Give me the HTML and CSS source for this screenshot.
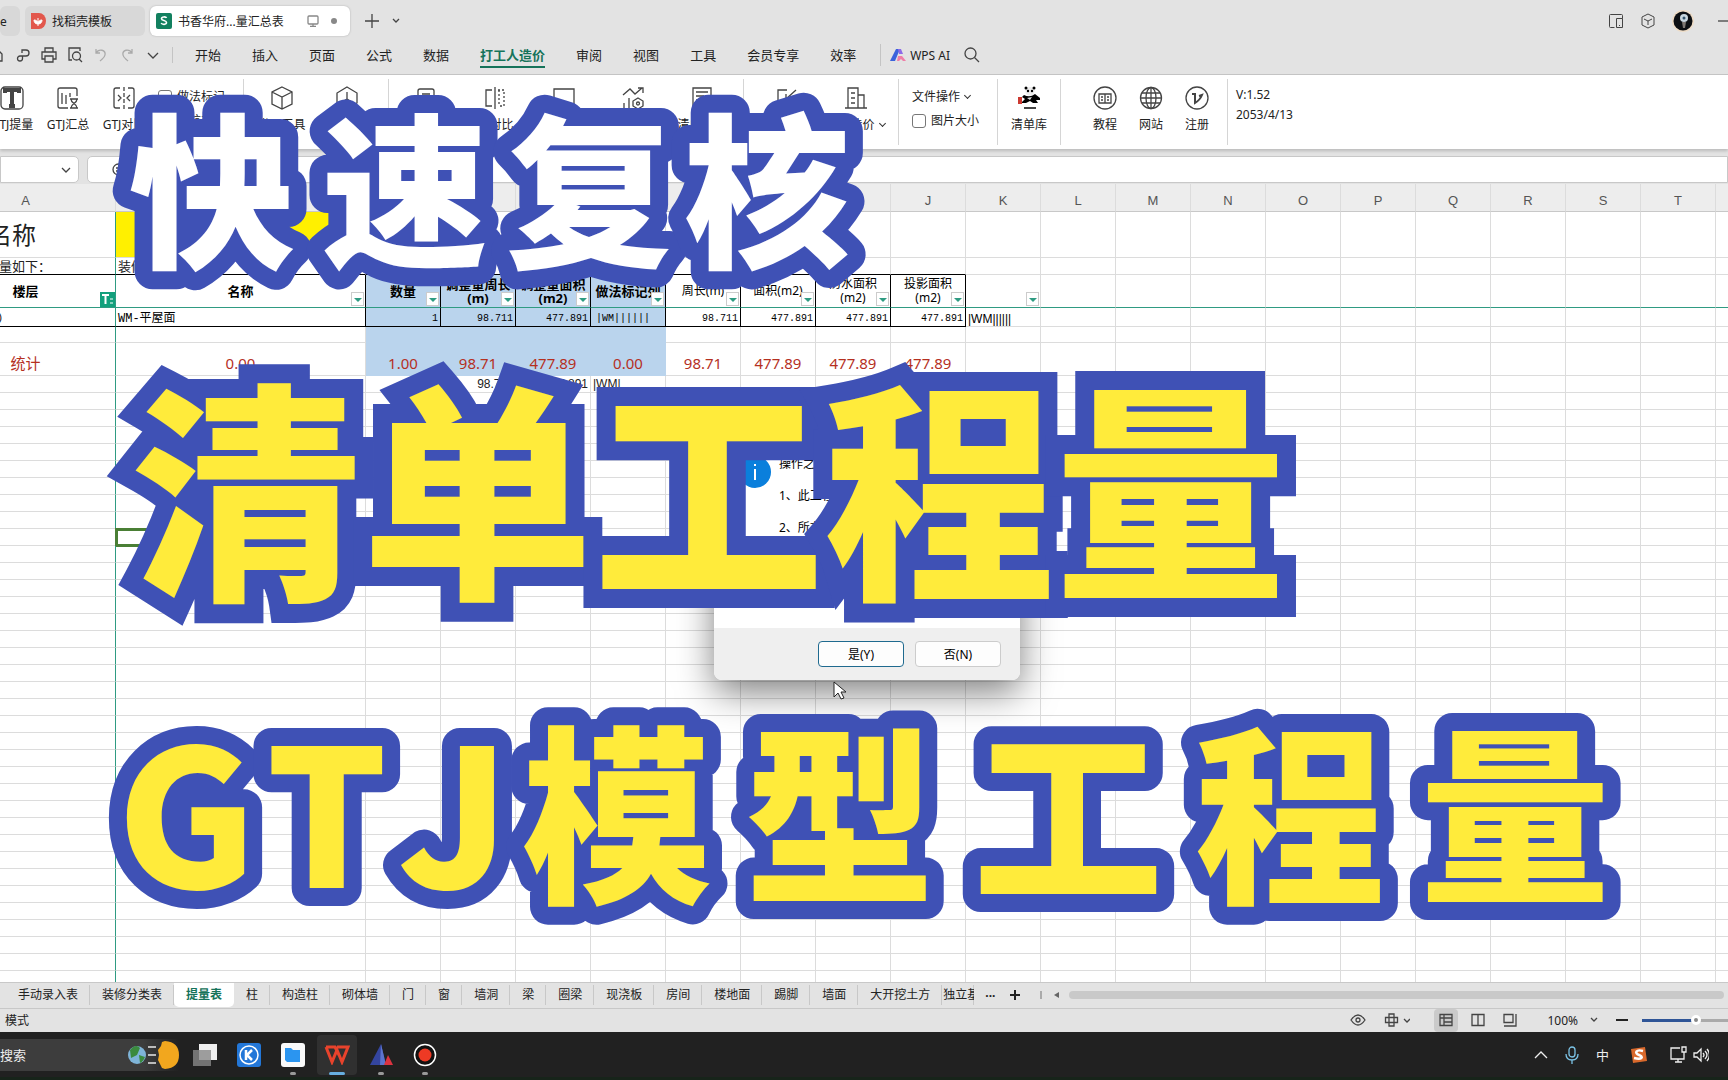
FILE: index.html
```
<!DOCTYPE html>
<html lang="zh-CN">
<head>
    <meta charset="UTF-8">
    <meta name="viewport" content="width=device-width, initial-scale=1.0">
    <title>书香华府工程量汇总表</title>
    <link rel="stylesheet" href="styles.css">
</head>
<body>
    <header class="titlebar">
        <button class="tab tab-cut">e</button>
        <button class="tab tab-docer">
            <svg width="16" height="16" viewBox="0 0 16 16"><path d="M1 0h8a7 8 0 0 1 0 16H1z" fill="#e2574c"/><path d="M8 13V5M8 11C5 11 4 9 4 7c2 0 4 1 4 4zM8 11c3 0 4-2 4-4-2 0-4 1-4 4z" stroke="#fff" fill="#fff"/></svg>
            找稻壳模板
        </button>
        <button class="tab tab-active">
            <svg width="16" height="16" viewBox="0 0 16 16"><rect width="16" height="16" rx="2" fill="#12805f"/><path d="M10.500 5C10 3.500 5.500 3.400 5.500 5.800c0 2.200 5 1.400 5 3.800 0 2.300-4.500 2.200-5.300.4" stroke="#fff" stroke-width="1.600" fill="none"/></svg>
            <span class="tab-name">书香华府...量汇总表</span>
            <svg class="ico grey" width="12" height="12" viewBox="0 0 12 12"><rect x="1" y="1" width="10" height="8" rx="1"/><path d="M6 9v2M3 11.500h6"/></svg>
            <i class="dot"></i>
        </button>
        <button class="plain"><svg class="ico" width="16" height="16" viewBox="0 0 16 16"><path d="M8 1v14M1 8h14"/></svg></button>
        <button class="plain"><svg class="ico" width="8" height="8" viewBox="0 0 8 8"><path d="M1 2l3 3 3-3"/></svg></button>
        <div class="window-tools">
            <svg class="ico thin" width="16" height="16" viewBox="0 0 16 16"><path d="M6.500 14.500h-4q-1 0-1-1v-11q0-1 1-1h11q1 0 1 1v3M8.500 5.500h6v9h-6zM11 12.500h1"/></svg>
            <svg class="ico thin" width="16" height="16" viewBox="0 0 16 16"><path d="M8 1l6 3v8l-6 3-6-3V4zM4 6l4 2 4-2M8 8v4"/></svg>
            <svg width="22" height="22" viewBox="0 0 22 22"><circle cx="11" cy="11" r="11" fill="#eedcc6"/><circle cx="11" cy="11" r="9.500" fill="#0c0f13"/><circle cx="12" cy="8" r="4" fill="#c9d6de"/><circle cx="12" cy="8" r="1.500" fill="#33536b"/><path d="M10 12h4l-1 6h-2z" fill="#7d7772"/></svg>
            <svg class="ico minimize" width="16" height="16" viewBox="0 0 16 16"><path d="M0 8h16"/></svg>
        </div>
    </header>

    <nav class="menubar">
        <div class="quick">
            <svg class="ico" width="16" height="16" viewBox="0 0 16 16"><path d="M2 7l6-5 5 5v7H9v-4M2 14h4"/></svg>
            <svg class="ico" width="16" height="16" viewBox="0 0 16 16"><path d="M7 6V3h4a3 3 0 0 1 0 6H5a2.500 2.500 0 1 0 2.500 2.500V9"/></svg>
            <svg class="ico" width="16" height="16" viewBox="0 0 16 16"><path d="M4 5V1h8v4M4 12H1V5h14v7h-3M4 9h8v6H4z"/></svg>
            <svg class="ico" width="16" height="16" viewBox="0 0 16 16"><path d="M5 13H2V1h11v3M15 15l-3-3"/><circle cx="9.500" cy="9" r="4"/></svg>
            <svg class="ico faint" width="16" height="16" viewBox="0 0 16 16"><path d="M3 2v4h4M3 6c3-5 10-3 9 2-.5 3-3 4-5 6"/></svg>
            <svg class="ico faint" width="16" height="16" viewBox="0 0 16 16"><path d="M13 2v4H9M13 6C10 1 3 3 4 8c.5 3 3 4 5 6"/></svg>
            <svg class="ico" width="16" height="16" viewBox="0 0 16 16"><path d="M3 6l5 5 5-5"/></svg>
        </div>
        <ul class="menu">
            <li><a href="#">开始</a></li>
            <li><a href="#">插入</a></li>
            <li><a href="#">页面</a></li>
            <li><a href="#">公式</a></li>
            <li><a href="#">数据</a></li>
            <li><a href="#" class="current">打工人造价</a></li>
            <li><a href="#">审阅</a></li>
            <li><a href="#">视图</a></li>
            <li><a href="#">工具</a></li>
            <li><a href="#">会员专享</a></li>
            <li><a href="#">效率</a></li>
        </ul>
        <button class="plain wps-ai">
            <svg width="16" height="14" viewBox="0 0 16 14"><path d="M0 13L6 1h4L5 13z" fill="#3b63dc"/><path d="M8 1h3l2 5h-4z" fill="#8d6be8"/><path d="M8 8h4l4 5h-3l-2-2-2 2H7z" fill="#ef7fa8"/></svg>
            WPS AI
        </button>
        <button class="plain"><svg class="ico" width="16" height="16" viewBox="0 0 16 16"><circle cx="6.500" cy="6.500" r="5.500"/><path d="M10.500 10.500L15 15"/></svg></button>
    </nav>

    <section class="ribbon">
        <div class="group group-gtj">
            <button class="tool"><svg class="ico" width="24" height="24" viewBox="0 0 24 24"><rect x="1" y="1" width="22" height="22" rx="4"/><path d="M5 7V4h14v3M12 4v16M9 20h6" stroke-width="4"/></svg>GTJ提量</button>
            <button class="tool"><svg class="ico" width="24" height="24" viewBox="0 0 24 24"><path d="M21 10V4q0-2-2-2H4Q2 2 2 4v16q0 2 2 2h8M6 7v11M10 9v9M14 7v4M14 13h8M14 22h8M15 13c0 5 6 4 6 9M21 13c0 5-6 4-6 9"/></svg>GTJ汇总</button>
            <button class="tool"><svg class="ico" width="24" height="24" viewBox="0 0 24 24"><path d="M8 2H4Q2 2 2 4v16q0 2 2 2h4M16 2h4q2 0 2 2v16q0 2-2 2h-4M6 9l3 3-3 3M18 9l-3 3 3 3"/><path d="M12 1v22" stroke-dasharray="4 2"/></svg>GTJ对比</button>
            <div class="checks">
                <label><input type="checkbox">做法标记</label>
                <label><input type="checkbox">导航栏</label>
            </div>
        </div>
        <div class="group group-tools">
            <button class="tool"><svg class="ico" width="24" height="24" viewBox="0 0 24 24"><path d="M12 1l10 5v12l-10 5-10-5V6zM2 6l10 5 10-5M12 11v12"/></svg>常用工具</button>
            <button class="tool"><svg class="ico" width="24" height="24" viewBox="0 0 24 24"><path d="M12 1l10 6v10l-10 6-10-6V7zM12 6v7M12 13l-5 3M12 13l5 3"/></svg><span>常用工具<i class="caret"></i></span></button>
        </div>
        <div class="group group-list">
            <button class="tool"><svg class="ico" width="24" height="24" viewBox="0 0 24 24"><path d="M20 11V5q0-2-2-2H6Q4 3 4 5v14q0 2 2 2h7M8 8h8M8 13h5"/><circle cx="18" cy="18" r="4"/><path d="M18 16v4"/></svg>清单工具</button>
            <button class="tool"><svg class="ico" width="24" height="24" viewBox="0 0 24 24"><path d="M9 4H3v16h6M12 1v22"/><path d="M15 4h6v16h-6M16 4v16" stroke-dasharray="2 2"/></svg><span>清单对比<i class="caret"></i></span></button>
            <button class="tool"><svg class="ico" width="24" height="24" viewBox="0 0 24 24"><path d="M2 20V3h20v17z"/></svg>工程</button>
            <button class="tool"><svg class="ico" width="24" height="24" viewBox="0 0 24 24"><path d="M2 9l7-6 5 5 7-6M17 2h5v5M3 17v6M8 12v11"/><path d="M17 12l5 3v5l-5 3-5-3v-5z"/><circle cx="17" cy="17.500" r="1.500"/></svg>分析</button>
            <button class="tool"><svg class="ico" width="24" height="24" viewBox="0 0 24 24"><path d="M21 12V2H3v20h8M6 6h12M6 10h8M6 14h4M19 19l4 4"/><circle cx="16" cy="16" r="4"/></svg>清单复核</button>
        </div>
        <div class="group group-price">
            <button class="tool"><svg class="ico" width="24" height="24" viewBox="0 0 24 24"><path d="M12 4H3v17h17v-8M21 4l-10 9M11 8v5h5"/></svg>做法标记</button>
            <button class="tool"><svg class="ico" width="24" height="24" viewBox="0 0 24 24"><path d="M1 22h22M4 22V2h10v20M14 9h6v13M7 7h4M7 12h4M7 17h4"/></svg><span>土建造价<i class="caret"></i></span></button>
        </div>
        <div class="group group-files">
            <div class="checks">
                <button class="plain">文件操作<i class="caret"></i></button>
                <label><input type="checkbox">图片大小</label>
            </div>
        </div>
        <div class="group group-lib">
            <button class="tool"><svg width="24" height="24" viewBox="0 0 24 24"><path d="M8 3q5-4 10 0l-1 5q-4 3-8 0z" fill="#eee"/><circle cx="9" cy="2" r="1.500"/><circle cx="17" cy="2" r="1.500"/><circle cx="11" cy="5" r="1.200"/><circle cx="15" cy="5" r="1.200"/><path d="M7 9q6 3 11-1l5 4v2h-4l2 3h-5l-3-2-4 2H4l4-4-3-2z"/><path d="M10 12l5-1-2 3z" fill="#ddd"/><rect x="1" y="11" width="4" height="7" fill="#cc3a31"/><path d="M7 21h12v2H7z" fill="#444"/></svg>清单库</button>
        </div>
        <div class="group group-help">
            <button class="tool"><svg class="ico" width="24" height="24" viewBox="0 0 24 24"><circle cx="12" cy="12" r="11"/><path d="M12 8v9M12 8H6v9h12V8zM8 11h2M8 14h2M14 11h2M14 14h2"/></svg>教程</button>
            <button class="tool"><svg class="ico" width="24" height="24" viewBox="0 0 24 24"><circle cx="12" cy="12" r="10.500"/><ellipse cx="12" cy="12" rx="5" ry="10.500"/><path d="M12 1v22M1 12h22M3 7h18M3 17h18"/></svg>网站</button>
            <button class="tool"><svg class="ico" width="24" height="24" viewBox="0 0 24 24"><circle cx="12" cy="12" r="11"/><path d="M7 8h3v9q5-3 7-8l-3 1" stroke-width="2"/></svg>注册</button>
        </div>
        <div class="version">V:1.52<br>2053/4/13</div>
    </section>

    <div class="formula">
        <div class="namebox"><svg class="ico" width="10" height="10" viewBox="0 0 10 10"><path d="M1 3l4 4 4-4"/></svg></div>
        <div class="fx">
            <svg class="ico" width="14" height="14" viewBox="0 0 14 14"><circle cx="6.500" cy="6.500" r="5.500"/><path d="M4 5h5M4 8h5M11 11l2 2"/></svg>
            <input type="text" aria-label="编辑栏">
        </div>
    </div>

    <main class="sheet">
        <table id="grid">
            <colgroup><col class="col-a"><col class="col-b"></colgroup>
            <thead><tr id="letters"></tr></thead>
            <tbody>
                <tr class="row-title"><td>名称</td><td class="yellow"></td><td></td><td></td><td class="green"></td></tr>
                <tr class="row-note"><td>提量如下：</td><td>装修提量模块</td><td></td><td>装修工程</td><td>首层</td><td class="right">1</td><td></td><td></td><td></td><td></td></tr>
                <tr class="row-head">
                    <th>楼层<button class="filter on" aria-label="筛选"><svg width="15" height="15" viewBox="0 0 15 15"><path d="M2 3h7M5.500 3v9" stroke="#fff" stroke-width="2"/><path d="M10 7h3M10 11h3" stroke="#fff"/></svg></button></th>
                    <th>名称<button class="filter"></button></th>
                    <th class="blue">数量<button class="filter"></button></th>
                    <th class="blue">调整量周长<br>(m)<button class="filter"></button></th>
                    <th class="blue">调整量面积<br>(m2)<button class="filter"></button></th>
                    <th class="blue">做法标记列<button class="filter"></button></th>
                    <th class="light">周长(m)<button class="filter"></button></th>
                    <th class="light">面积(m2)<button class="filter"></button></th>
                    <th class="light">防水面积<br>(m2)<button class="filter"></button></th>
                    <th class="light">投影面积<br>(m2)<button class="filter"></button></th>
                    <th class="bare"><button class="filter"></button></th>
                </tr>
                <tr class="row-data"><td>)</td><td class="name">WM-平屋面</td><td class="blue">1</td><td class="blue">98.711</td><td class="blue">477.891</td><td class="blue left">|WM||||||</td><td>98.711</td><td>477.891</td><td>477.891</td><td>477.891</td><td class="bare">|WM||||||</td></tr>
                <tr class="row-gap"><td></td><td></td><td class="blue"></td><td class="blue"></td><td class="blue"></td><td class="blue"></td></tr>
                <tr class="row-sum"><td>统计</td><td>0.00</td><td class="blue">1.00</td><td class="blue">98.71</td><td class="blue">477.89</td><td class="blue">0.00</td><td>98.71</td><td>477.89</td><td>477.89</td><td>477.89</td></tr>
                <tr class="row-plain"><td></td><td></td><td></td><td class="right">98.711</td><td class="right">477.891</td><td>|WM|</td></tr>
            </tbody>
        </table>
    </main>

    <footer>
        <div class="sheet-tabs">
            <button>手动录入表</button>
            <button>装修分类表</button>
            <button class="selected">提量表</button>
            <button>柱</button>
            <button>构造柱</button>
            <button>砌体墙</button>
            <button>门</button>
            <button>窗</button>
            <button>墙洞</button>
            <button>梁</button>
            <button>圈梁</button>
            <button>现浇板</button>
            <button>房间</button>
            <button>楼地面</button>
            <button>踢脚</button>
            <button>墙面</button>
            <button>大开挖土方</button>
            <button class="clipped">独立基</button>
            <span class="more">···</span>
            <svg class="ico add" width="12" height="12" viewBox="0 0 12 12"><path d="M6 1v10M1 6h10"/></svg>
            <i class="grip"></i>
            <svg width="5" height="6" viewBox="0 0 5 6"><path d="M5 0v6L0 3z" fill="#666"/></svg>
            <div class="hscroll"></div>
        </div>
        <div class="status">
            <span class="mode">模式</span>
            <svg class="ico" width="16" height="16" viewBox="0 0 16 16"><path d="M1 8q7-10 14 0-7 10-14 0z"/><circle cx="8" cy="8" r="2"/></svg>
            <svg class="ico move" width="26" height="16" viewBox="0 0 26 16"><path d="M5 5V2h5v3M5 11v3h5v-3M5 5.500H1.500v5H5M10 5.500h3.500v5H10M5 5.500h5v5H5zM20 7l3 3 3-3"/></svg>
            <button class="view view-on"><svg class="ico" width="14" height="14" viewBox="0 0 14 14"><path d="M1 1.500h12v11H1zM1 5h12M5 1.500v11M5 9h8"/></svg></button>
            <button class="view"><svg class="ico" width="14" height="14" viewBox="0 0 14 14"><path d="M1 1.500h12v11H1zM7 1.500v11"/></svg></button>
            <button class="view"><svg class="ico" width="14" height="14" viewBox="0 0 14 14"><path d="M1 1.500h9v8H1zM13 1v12H1"/></svg></button>
            <span class="percent">100%</span>
            <svg class="ico" width="8" height="8" viewBox="0 0 8 8"><path d="M1 2l3 3 3-3"/></svg>
            <svg class="ico minus" width="12" height="12" viewBox="0 0 12 12"><path d="M0 6h12"/></svg>
            <input class="zoom" type="range" aria-label="缩放" min="0" max="100" value="50">
        </div>
    </footer>

    <div class="taskbar">
        <div class="search">
            <span>搜索</span>
            <svg width="52" height="30" viewBox="0 0 52 30"><circle cx="10" cy="15" r="9" fill="#7fb4d8"/><path d="M3 10q6-7 10-2l-3 7-6 3zM12 15l6 2q-2 5-5 6z" fill="#3b8a3e"/><path d="M21 7h8M21 15h8M21 23h8" stroke="#bbb" stroke-width="2"/><path d="M35 2l3-1q14 1 14 14T38 29l-3-1-2-4-2-4 1-5-1-5 3-4z" fill="#f2a71e"/></svg>
        </div>
        <button class="app"><svg width="24" height="24" viewBox="0 0 24 24"><rect x="6" y="1" width="18" height="16" fill="#eee"/><rect y="7" width="18" height="16" fill="#888" opacity=".8"/></svg></button>
        <button class="app"><svg width="24" height="24" viewBox="0 0 24 24"><rect width="24" height="24" rx="3" fill="#2377d8"/><circle cx="12" cy="12" r="9" fill="none" stroke="#fff" stroke-width="1.500"/><path d="M9 7v10M15 7l-5 5 5 5" fill="none" stroke="#fff" stroke-width="2.500"/></svg></button>
        <button class="app running"><svg width="24" height="24" viewBox="0 0 24 24"><rect width="24" height="24" rx="3" fill="#fafafa"/><path d="M4 5h6l2 2h7v12H6l-2-2z" fill="#2b95f0"/></svg></button>
        <button class="app running front"><svg width="26" height="20" viewBox="0 0 26 20"><path d="M2 2l6 15 5-12 5 12 6-15H13M2 2h9l4 8" fill="none" stroke="#e8432c" stroke-width="3"/></svg></button>
        <button class="app running"><svg width="24" height="24" viewBox="0 0 24 24"><path d="M12 1l5 21H1z" fill="#34459f"/><path d="M12 1l5 21h-6z" fill="#5c74cf"/><path d="M19 12l5 10h-9z" fill="#dc3340"/></svg></button>
        <button class="app running"><svg width="24" height="24" viewBox="0 0 24 24"><circle cx="12" cy="12" r="10.500" fill="#111" stroke="#fff" stroke-width="1.500"/><circle cx="12" cy="12" r="6.500" fill="#ee3a24"/></svg></button>
        <div class="tray">
            <svg class="ico" width="14" height="14" viewBox="0 0 14 14"><path d="M1 10l6-6 6 6"/></svg>
            <svg class="ico mic" width="14" height="18" viewBox="0 0 14 18"><rect x="4" y="1" width="6" height="10" rx="3"/><path d="M1 8q0 6 6 6t6-6M7 14v4"/></svg>
            <span>中</span>
            <svg class="sogou" width="18" height="18" viewBox="0 0 18 18"><path d="M1 3l14-2 2 14-14 2z" fill="#d9692c"/><path d="M13 5c-7-2-9 2-4 4s3 5-5 3" stroke="#fff" stroke-width="2.500" fill="none"/></svg>
            <svg class="ico net" width="18" height="18" viewBox="0 0 18 18"><path d="M10 2H1v11h13V8M5 16h7M8 13v3M12 1h4v5h-4zM14 6v7"/></svg>
            <svg class="ico" width="16" height="16" viewBox="0 0 16 16"><path d="M1 6h3l4-4v12L4 10H1zM10 6q2 2 0 4M12 4q4 4 0 8M14 2q5 6 0 12"/></svg>
        </div>
    </div>

    <div class="dialog" role="dialog">
        <div class="dialog-body">
            <svg width="32" height="32" viewBox="0 0 32 32"><circle cx="16" cy="16" r="16" fill="#0a7fdc"/><path d="M16 13v11M16 8v2" stroke="#fff" stroke-width="2"/></svg>
            <div>
                <p>操作之前</p>
                <p>1、此工程内</p>
                <p>2、所有</p>
            </div>
        </div>
        <div class="dialog-foot">
            <button class="yes">是(Y)</button>
            <button>否(N)</button>
        </div>
    </div>
    <svg class="cursor" width="14" height="20" viewBox="0 0 14 20"><path d="M1 1v15l4-4 3 6 3-1-3-6h5z" fill="#fff" stroke="#222"/></svg>

    <svg class="captions">
        <text class="round white" x="129 322 506 684" y="255">快速复核</text>
        <text class="sharp" x="131" y="581">清单工程量</text>
        <text class="round" x="117 266 398 522 745 935 973 1163 1195 1385 1420" y="888">GTJ模型 工 程 量</text>
    </svg>

    <script>
        const COLS = 21;
        const grid = document.getElementById("grid");
        const letters = document.getElementById("letters");

        for (let i = 0; i < COLS; i++) {
            const th = document.createElement("th");
            th.textContent = i < 20 ? String.fromCharCode(65 + i) : "";
            letters.appendChild(th);
        }

        // empty rows below the data
        for (let r = 0; r < 40; r++) {
            grid.tBodies[0].insertRow().className = "row-plain";
        }

        for (const row of grid.tBodies[0].rows) {
            while (row.cells.length < COLS) {
                row.insertCell().className = "bare";
            }
        }

        grid.tBodies[0].rows[15].cells[1].classList.add("cell-selected");
    </script>
</body>
</html>
```
FILE: styles.css
```
* {
    box-sizing: border-box;
}
body {
    margin: 0;
    height: 100vh;
    display: flex;
    flex-direction: column;
    overflow: hidden;
    position: relative;
    background: #e3e3e3;
    color: #222;
    font-family: "Noto Sans", "Noto Sans CJK SC", sans-serif;
    font-size: 12px;
}
button {
    font: inherit;
    color: inherit;
    border: 0;
    padding: 0;
    background: none;
}
svg {
    flex: none;
}
.ico {
    fill: none;
    stroke: #444;
    stroke-width: 1.3;
}
.ico.thin {
    stroke-width: 1;
}
.ico.grey {
    stroke: #888;
}
.ico.faint {
    stroke: #aaa;
}
.ico.add, .ico.minus {
    stroke: #222;
    stroke-width: 2;
}
.caret {
    display: inline-block;
    width: 5px;
    height: 5px;
    margin: 0 0 3px 5px;
    border-right: 1px solid #333;
    border-bottom: 1px solid #333;
    transform: rotate(45deg);
}
.plain {
    display: flex;
    align-items: center;
}

/* title bar */
.titlebar {
    display: flex;
    align-items: center;
    height: 38px;
    padding-top: 4px;
    flex: none;
}
.tab {
    height: 30px;
    display: flex;
    align-items: center;
    gap: 6px;
    background: #d8d8d8;
    border-radius: 6px;
}
.tab-cut {
    width: 20px;
    margin-right: 5px;
}
.tab-docer {
    width: 120px;
    padding-left: 5px;
    margin-right: 5px;
}
.tab-active {
    width: 200px;
    padding: 0 13px 0 6px;
    margin-right: 14px;
    background: #fff;
    box-shadow: 0 0 2px #aaa;
}
.tab-active + .plain {
    margin-right: 12px;
}
.tab-name {
    flex: 1;
    text-align: left;
    white-space: nowrap;
}
.dot {
    width: 6px;
    height: 6px;
    border-radius: 50%;
    background: #888;
    margin-left: 6px;
}
.window-tools {
    margin-left: auto;
    display: flex;
    align-items: center;
    gap: 16px;
}
.minimize {
    margin-right: -6px;
    margin-left: 8px;
}

/* menu */
.menubar {
    height: 37px;
    flex: none;
    display: flex;
    align-items: center;
    padding-bottom: 2px;
    font-size: 13px;
    border-bottom: 1px solid #c4c4c4;
}
.quick {
    display: flex;
    gap: 10px;
    margin-left: -11px;
    padding-right: 11px;
    border-right: 1px solid #c4c4c4;
}
.menu {
    display: flex;
    gap: 31px;
    margin: 0;
    padding: 0 24px 0 22px;
    list-style: none;
    border-right: 1px solid #c4c4c4;
}
.menu a {
    display: block;
    line-height: 22px;
    color: #222;
    text-decoration: none;
}
.menu a.current {
    color: #16735a;
    font-weight: bold;
    box-shadow: 0 2px #16735a;
}
.wps-ai {
    gap: 4px;
    margin: 0 14px 0 9px;
    font-size: 12px;
}

/* ribbon */
.ribbon {
    height: 74px;
    flex: none;
    display: flex;
    padding: 4px 0;
    background: #fff;
    box-shadow: 0 2px 3px #bbb;
}
.group {
    display: flex;
    border-right: 1px solid #d5d5d5;
}
.tool {
    display: flex;
    flex-direction: column;
    align-items: center;
    gap: 6px;
    padding-top: 7px;
    white-space: nowrap;
    line-height: 17px;
}
.group-gtj {
    width: 260px;
    margin-left: -16px;
}
.group-gtj .tool {
    width: 56px;
}
.group-tools {
    width: 145px;
    padding-left: 5px;
}
.group-tools .tool {
    width: 65px;
}
.group-list {
    width: 355px;
    padding-left: 2px;
}
.group-price {
    width: 155px;
    padding-left: 8px;
}
.group-list .tool, .group-price .tool {
    width: 69px;
}
.group-files {
    width: 99px;
    padding-left: 13px;
}
.group-lib {
    width: 63px;
    justify-content: center;
}
.group-help {
    width: 167px;
    padding-left: 21px;
}
.group-help .tool {
    width: 46px;
}
.checks {
    display: flex;
    flex-direction: column;
    gap: 6px;
    padding: 9px 0 0 6px;
}
.group-files .checks {
    padding-left: 0;
}
.checks label {
    display: flex;
    align-items: center;
    gap: 5px;
    line-height: 18px;
}
.checks .plain {
    line-height: 18px;
}
.checks input {
    appearance: none;
    width: 14px;
    height: 14px;
    margin: 0;
    border: 1px solid #777;
    border-radius: 3px;
    background: #fff;
}
.version {
    padding: 6px 0 0 8px;
    line-height: 20px;
}

/* formula bar */
.formula {
    height: 35px;
    flex: none;
    display: flex;
    gap: 8px;
    padding: 7px 0 1px;
}
.namebox, .fx {
    display: flex;
    align-items: center;
    background: #fff;
    border: 1px solid #c8c8c8;
}
.namebox {
    width: 79px;
    justify-content: flex-end;
    padding-right: 7px;
    border-radius: 0 5px 5px 0;
}
.fx {
    flex: 1;
    padding-left: 24px;
    border-radius: 5px 0 0 5px;
}
.fx input {
    flex: 1;
    border: 0;
    outline: 0;
    background: none;
}

/* sheet */
.sheet {
    flex: 1;
    min-height: 0;
    overflow: hidden;
    background: #fff;
}
#grid {
    table-layout: fixed;
    width: 1855px;
    margin-left: -64px;
    border-spacing: 0;
    line-height: 14px;
}
.col-a {
    width: 180px;
}
.col-b {
    width: 250px;
}
#grid td, #grid th {
    padding: 0 2px;
    position: relative;
    overflow: hidden;
    white-space: nowrap;
    border-right: 1px solid #dcdcdc;
    border-bottom: 1px solid #dcdcdc;
}
#grid thead th {
    height: 28px;
    padding-top: 5px;
    background: #ededed;
    color: #555;
    font: 13px "Liberation Sans", sans-serif;
    border-bottom-color: #c8c8c8;
}
#grid tbody td:first-child, #grid tbody th:first-child {
    border-right-color: #2f9b82;
}
#grid .blue {
    background: #bad4ed;
}
#grid .right {
    text-align: right;
}
.row-title td {
    height: 46px;
    font-size: 24px;
    line-height: 40px;
}
#grid .row-title td:first-child {
    padding-left: 52px;
}
.yellow {
    background: #fff000;
}
.green {
    background: #8bc34a;
}
.row-note td {
    height: 17px;
    font-size: 13px;
}
#grid .row-note td:first-child {
    padding-left: 50px;
}
#grid .row-note td:not(.bare) {
    border-bottom-color: #000;
}
.row-head th {
    height: 33px;
    font-size: 13px;
    color: #000;
}
#grid .row-head th, #grid .row-head .bare {
    border-bottom-color: #2f9b82;
}
#grid .row-head th:not(.bare):not(:first-child), #grid .row-data td:not(.bare):not(:first-child) {
    border-right-color: #000;
}
.row-head .light {
    font-weight: normal;
    font-size: 12px;
}
.filter {
    position: absolute;
    right: 1px;
    bottom: 1px;
    width: 13px;
    height: 14px;
    background: #fff;
    border: 1px solid #ccc;
}
.filter::after {
    content: "";
    position: absolute;
    left: 2px;
    top: 5px;
    border: 4px solid transparent;
    border-top-color: #2f9b82;
    border-bottom: 0;
}
.filter.on {
    right: 0;
    bottom: 0;
    width: 15px;
    height: 15px;
    border: 0;
    background: #12a07c;
}
.filter.on::after {
    display: none;
}
.row-data td {
    height: 19px;
    font: 10px "Liberation Mono", "Noto Sans CJK SC", monospace;
    line-height: 14px;
    text-align: right;
    vertical-align: bottom;
    color: #000;
}
#grid .row-data td:not(.bare) {
    border-bottom-color: #000;
}
#grid .row-data td:first-child {
    padding-right: 112px;
}
#grid .row-data .left {
    text-align: left;
    padding-left: 5px;
}
#grid .row-data .name {
    font-size: 12px;
    text-align: left;
}
.row-data .bare, .row-plain td {
    font: 12px "Liberation Sans", sans-serif;
    line-height: 14px;
    text-align: left;
}
.row-gap td {
    height: 16px;
}
.row-sum td {
    height: 33px;
    font-size: 15px;
    line-height: 24px;
    text-align: center;
    vertical-align: bottom;
    color: #b5301f;
}
#grid .row-gap .blue, #grid .row-sum .blue {
    border-color: #bad4ed;
}
.row-plain td {
    height: 17px;
}
.cell-selected {
    outline: 3px solid #4a7f35;
    outline-offset: -2px;
}

/* sheet tabs and status bar */
.sheet-tabs {
    height: 27px;
    display: flex;
    align-items: center;
    padding: 0 4px 1px 6px;
    border-top: 1px solid #c8c8c8;
    border-bottom: 1px solid #c8c8c8;
}
.sheet-tabs button {
    padding: 0 12px;
    line-height: 20px;
    flex: none;
    box-shadow: inset -1px 0 #c8c8c8;
}
.sheet-tabs .selected {
    align-self: stretch;
    background: #fff;
    color: #16735a;
    font-weight: bold;
    border-radius: 0 0 5px 5px;
    box-shadow: none;
}
.sheet-tabs .clipped {
    width: 32px;
    padding: 0 0 0 1px;
    overflow: hidden;
    white-space: nowrap;
}
.more {
    margin: 0 14px 0 11px;
    font-weight: bold;
}
.grip {
    width: 2px;
    height: 8px;
    background: #aaa;
    margin: 0 12px 0 19px;
}
.hscroll {
    flex: 1;
    height: 8px;
    margin-left: 10px;
    border-radius: 4px;
    background: #c9c9c9;
}
.status {
    height: 23px;
    display: flex;
    align-items: center;
    gap: 8px;
    padding: 0 0 1px 5px;
}
.mode {
    margin-right: auto;
}
.move {
    margin: 0 16px 0 10px;
}
.view {
    width: 24px;
    height: 23px;
    display: flex;
    align-items: center;
    justify-content: center;
    border-radius: 4px;
}
.view-on {
    background: #cacaca;
}
.percent {
    margin: 0 4px 0 17px;
}
.status .minus {
    margin-left: 10px;
}
.zoom {
    appearance: none;
    width: 108px;
    height: 3px;
    margin: 0 -22px 0 6px;
    background: linear-gradient(to right, #2f5597 50%, #aaa 50%);
}
.zoom::-webkit-slider-thumb {
    appearance: none;
    width: 10px;
    height: 10px;
    border: 3px solid #fff;
    border-radius: 50%;
    background: #888;
}

/* taskbar */
.taskbar {
    height: 48px;
    flex: none;
    display: flex;
    align-items: center;
    gap: 4px;
    background: #212121;
    border-bottom: 3px solid #17241a;
    color: #eee;
}
.search {
    width: 179px;
    height: 32px;
    display: flex;
    align-items: center;
    justify-content: space-between;
    font-size: 13px;
    background: linear-gradient(to right, #3d3d3d 80%, #212121);
}
.app {
    width: 40px;
    height: 40px;
    display: flex;
    align-items: center;
    justify-content: center;
    position: relative;
    border-radius: 4px;
}
.search + .app {
    margin-left: 2px;
}
.running::after {
    content: "";
    position: absolute;
    bottom: 0;
    width: 6px;
    height: 3px;
    border-radius: 2px;
    background: #999;
}
.front {
    background: #303030;
}
.front::after {
    width: 16px;
    background: #67aee0;
}
.tray {
    margin-left: auto;
    padding-right: 19px;
    display: flex;
    align-items: center;
    gap: 17px;
    font-size: 13px;
}
.tray .ico {
    stroke: #eee;
}
.tray .mic {
    stroke: #7cc3e6;
}
.tray .sogou {
    margin-left: 4px;
}
.tray .net {
    margin: 0 -12px 0 5px;
}

/* message box over the sheet */
.dialog {
    position: absolute;
    left: 714px;
    top: 420px;
    width: 306px;
    background: #fff;
    border-radius: 8px;
    box-shadow: 0 12px 36px rgba(0, 0, 0, 0.5);
    overflow: hidden;
    color: #000;
}
.dialog-body {
    height: 208px;
    display: flex;
    gap: 8px;
    padding: 36px 25px;
}
.dialog-body p {
    margin: 0 0 16px;
    line-height: 16px;
}
.dialog-foot {
    height: 52px;
    display: flex;
    justify-content: flex-end;
    align-items: center;
    gap: 11px;
    padding-right: 19px;
    background: #efefef;
}
.dialog-foot button {
    width: 86px;
    height: 26px;
    background: #fdfdfd;
    border: 1px solid #ccc;
    border-radius: 4px;
}
.dialog-foot .yes {
    border-color: #1f6a8f;
}
.cursor {
    position: absolute;
    left: 833px;
    top: 681px;
}

/* big captions */
.captions {
    position: absolute;
    left: 0;
    top: 0;
    width: 100%;
    height: 100%;
    pointer-events: none;
    font-family: "Noto Sans CJK SC", sans-serif;
    font-weight: 900;
}
.captions text {
    fill: #ffeb3b;
    stroke: #3f51b5;
    paint-order: stroke;
}
.captions .round {
    font-size: 190px;
    stroke-width: 36px;
    stroke-linejoin: round;
}
.captions .white {
    font-size: 166px;
    fill: #fff;
}
.captions .sharp {
    font-size: 231px;
    stroke-width: 38px;
    stroke-linejoin: miter;
}
```
